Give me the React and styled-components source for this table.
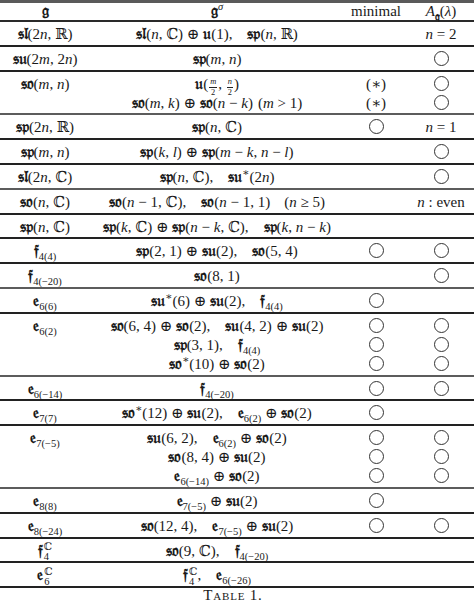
import React from "react";
import styled, { createGlobalStyle } from "styled-components";

const Global = createGlobalStyle`
  html, body {
    margin: 0;
    padding: 0;
    background: #fff;
  }
  body {
    font-family: "Liberation Serif", "DejaVu Serif", serif;
    color: #1a1a1a;
  }
`;

/* ---------- TABLE ---------- */
const Sheet = styled.div`
  width: 474px;
  overflow: hidden;
`;

const Table = styled.table`
  width: 474px;
  border-collapse: collapse;
  table-layout: fixed;
  font-size: 15px;
  border-top: 3px solid #5a5a5a;
`;

const Col = styled.col`
  width: ${(p) => p.$w}px;
`;

const HeadCell = styled.th`
  font-weight: normal;
  text-align: center;
  line-height: 16px;
  height: 16px;
  padding: 0 0 1px;
  border-bottom: 2px solid #2a2a2a;
`;

const Cell = styled.td`
  text-align: center;
  vertical-align: top;
  padding: 3px 0 0.8px;
  white-space: nowrap;
  border-bottom: ${(p) => (p.$soft ? "2.5px solid #5c5c5c" : "2px solid #222")};
`;

const Line = styled.div`
  height: 19px;
  line-height: 19px;
  overflow: visible;
`;

/* ---------- MATH PIECES ---------- */
const Frak = styled.span`
  font-family: "DejaVu Sans", "DejaVu Serif", "Noto Sans", serif;
  font-size: 1.08em;
  font-weight: bold;
  line-height: 0;
`;

const V = styled.i`
  font-style: italic;
`;

const Sub = styled.sub`
  font-size: 0.7em;
  vertical-align: -0.4em;
  line-height: 0;
`;

const Sup = styled.sup`
  font-size: 0.7em;
  vertical-align: 0.55em;
  line-height: 0;
`;

const Stack = styled.span`
  display: inline-flex;
  flex-direction: column;
  align-items: flex-start;
  vertical-align: 0.55em;
  font-size: 0.7em;
  line-height: 0.95em;
  margin-left: 1px;
`;

const Frac = styled.span`
  display: inline-flex;
  flex-direction: column;
  align-items: center;
  vertical-align: 0.5em;
  font-size: 0.56em;
  line-height: 7.5px;
  margin: 0 1px;

  & > span:first-child {
    border-bottom: 0.8px solid #222;
    padding: 0 1px 1px;
  }
  & > span:last-child {
    padding-top: 1px;
  }
`;

const Gap = styled.span`
  display: inline-block;
  width: ${(p) => p.$w || 15}px;
`;

const Circ = styled.span`
  display: inline-block;
  width: 13px;
  height: 13px;
  border: 1px solid #333;
  border-radius: 50%;
  vertical-align: -2px;
`;

const Caption = styled.div`
  text-align: center;
  font-variant: small-caps;
  font-size: 15px;
  line-height: 15px;
  padding-right: 8px;
  letter-spacing: 0.8px;
`;

/* ---------- helpers ---------- */
const F = ({ children }) => <Frak>{children}</Frak>;
const plus = " ⊕ ";

const e = (sub) => (
  <>
    <F>𝔢</F>
    <Sub>{sub}</Sub>
  </>
);
const f = (sub) => (
  <>
    <F>𝔣</F>
    <Sub>{sub}</Sub>
  </>
);
const neg = (n) => <>(−{n})</>;
const half = (v) => (
  <Frac>
    <span><V>{v}</V></span>
    <span>2</span>
  </Frac>
);

const rows = [
  {
    g: <><F>𝔰𝔩</F>(2<V>n</V>, ℝ)</>,
    lines: [[<><F>𝔰𝔩</F>(<V>n</V>, ℂ){plus}<F>𝔲</F>(1),<Gap /><F>𝔰𝔭</F>(<V>n</V>, ℝ)</>, null, <><V>n</V> = 2</>]],
  },
  {
    g: <><F>𝔰𝔲</F>(2<V>m</V>, 2<V>n</V>)</>,
    lines: [[<><F>𝔰𝔭</F>(<V>m</V>, <V>n</V>)</>, null, <Circ />]],
  },
  {
    g: <><F>𝔰𝔬</F>(<V>m</V>, <V>n</V>)</>,
    soft: true,
    lines: [
      [<><F>𝔲</F>({half("m")}, {half("n")})</>, "(∗)", <Circ />],
      [<><F>𝔰𝔬</F>(<V>m</V>, <V>k</V>){plus}<F>𝔰𝔬</F>(<V>n</V> − <V>k</V>)<Gap $w={5} />(<V>m</V> &gt; 1)</>, "(∗)", <Circ />],
    ],
  },
  {
    g: <><F>𝔰𝔭</F>(2<V>n</V>, ℝ)</>,
    lines: [[<><F>𝔰𝔭</F>(<V>n</V>, ℂ)</>, <Circ />, <><V>n</V> = 1</>]],
  },
  {
    g: <><F>𝔰𝔭</F>(<V>m</V>, <V>n</V>)</>,
    lines: [[<><F>𝔰𝔭</F>(<V>k</V>, <V>l</V>){plus}<F>𝔰𝔭</F>(<V>m</V> − <V>k</V>, <V>n</V> − <V>l</V>)</>, null, <Circ />]],
  },
  {
    g: <><F>𝔰𝔩</F>(2<V>n</V>, ℂ)</>,
    soft: true,
    lines: [[<><F>𝔰𝔭</F>(<V>n</V>, ℂ),<Gap /><F>𝔰𝔲</F><Sup>∗</Sup>(2<V>n</V>)</>, null, <Circ />]],
  },
  {
    g: <><F>𝔰𝔬</F>(<V>n</V>, ℂ)</>,
    lines: [[<><F>𝔰𝔬</F>(<V>n</V> − 1, ℂ),<Gap /><F>𝔰𝔬</F>(<V>n</V> − 1, 1)<Gap $w={14} />(<V>n</V> ≥ 5)</>, null, <><V>n</V> : even</>]],
  },
  {
    g: <><F>𝔰𝔭</F>(<V>n</V>, ℂ)</>,
    lines: [[<><F>𝔰𝔭</F>(<V>k</V>, ℂ){plus}<F>𝔰𝔭</F>(<V>n</V> − <V>k</V>, ℂ),<Gap /><F>𝔰𝔭</F>(<V>k</V>, <V>n</V> − <V>k</V>)</>, null, null]],
  },
  {
    g: f("4(4)"),
    lines: [[<><F>𝔰𝔭</F>(2, 1){plus}<F>𝔰𝔲</F>(2),<Gap /><F>𝔰𝔬</F>(5, 4)</>, <Circ />, <Circ />]],
  },
  {
    g: f(<>4{neg(20)}</>),
    soft: true,
    lines: [[<><F>𝔰𝔬</F>(8, 1)</>, null, <Circ />]],
  },
  {
    g: e("6(6)"),
    lines: [[<><F>𝔰𝔲</F><Sup>∗</Sup>(6){plus}<F>𝔰𝔲</F>(2),<Gap />{f("4(4)")}</>, <Circ />, null]],
  },
  {
    g: e("6(2)"),
    soft: true,
    lines: [
      [<><F>𝔰𝔬</F>(6, 4){plus}<F>𝔰𝔬</F>(2),<Gap /><F>𝔰𝔲</F>(4, 2){plus}<F>𝔰𝔲</F>(2)</>, <Circ />, <Circ />],
      [<><F>𝔰𝔭</F>(3, 1),<Gap />{f("4(4)")}</>, <Circ />, <Circ />],
      [<><F>𝔰𝔬</F><Sup>∗</Sup>(10){plus}<F>𝔰𝔬</F>(2)</>, <Circ />, <Circ />],
    ],
  },
  {
    g: e(<>6{neg(14)}</>),
    lines: [[f(<>4{neg(20)}</>), <Circ />, <Circ />]],
  },
  {
    g: e("7(7)"),
    lines: [[<><F>𝔰𝔬</F><Sup>∗</Sup>(12){plus}<F>𝔰𝔲</F>(2),<Gap />{e("6(2)")}{plus}<F>𝔰𝔬</F>(2)</>, <Circ />, null]],
  },
  {
    g: e(<>7{neg(5)}</>),
    soft: true,
    lines: [
      [<><F>𝔰𝔲</F>(6, 2),<Gap />{e("6(2)")}{plus}<F>𝔰𝔬</F>(2)</>, <Circ />, <Circ />],
      [<><F>𝔰𝔬</F>(8, 4){plus}<F>𝔰𝔲</F>(2)</>, <Circ />, <Circ />],
      [<>{e(<>6{neg(14)}</>)}{plus}<F>𝔰𝔬</F>(2)</>, <Circ />, <Circ />],
    ],
  },
  {
    g: e("8(8)"),
    lines: [[<>{e(<>7{neg(5)}</>)}{plus}<F>𝔰𝔲</F>(2)</>, <Circ />, null]],
  },
  {
    g: e(<>8{neg(24)}</>),
    lines: [[<><F>𝔰𝔬</F>(12, 4),<Gap />{e(<>7{neg(5)}</>)}{plus}<F>𝔰𝔲</F>(2)</>, <Circ />, <Circ />]],
  },
  {
    g: <><F>𝔣</F><Stack><span>ℂ</span><span>4</span></Stack></>,
    lines: [[<><F>𝔰𝔬</F>(9, ℂ),<Gap />{f(<>4{neg(20)}</>)}</>, null, null]],
  },
  {
    g: <><F>𝔢</F><Stack><span>ℂ</span><span>6</span></Stack></>,
    lines: [[<><F>𝔣</F><Stack><span>ℂ</span><span>4</span></Stack>,<Gap />{e(<>6{neg(26)}</>)}</>, null, null]],
  },
];

const App = () => {
  return (
    <Sheet>
      <Global />
      <Table>
        <colgroup>
          <Col $w={90} />
          <Col $w={254} />
          <Col $w={64} />
          <Col $w={66} />
        </colgroup>
        <thead>
          <tr>
            <HeadCell><F>𝔤</F></HeadCell>
            <HeadCell><F>𝔤</F><Sup><V>σ</V></Sup></HeadCell>
            <HeadCell>minimal</HeadCell>
            <HeadCell><V>A</V><Sub><F>𝔮</F></Sub>(<V>λ</V>)</HeadCell>
          </tr>
        </thead>
        <tbody>
          {rows.map((r, i) => (
            <tr key={i}>
              <Cell $soft={r.soft}>
                <Line>{r.g}</Line>
              </Cell>
              {[0, 1, 2].map((c) => (
                <Cell key={c} $soft={r.soft}>
                  {r.lines.map((ln, j) => (
                    <Line key={j}>{ln[c]}</Line>
                  ))}
                </Cell>
              ))}
            </tr>
          ))}
        </tbody>
      </Table>
      <Caption>Table 1.</Caption>
    </Sheet>
  );
};

export default App;
